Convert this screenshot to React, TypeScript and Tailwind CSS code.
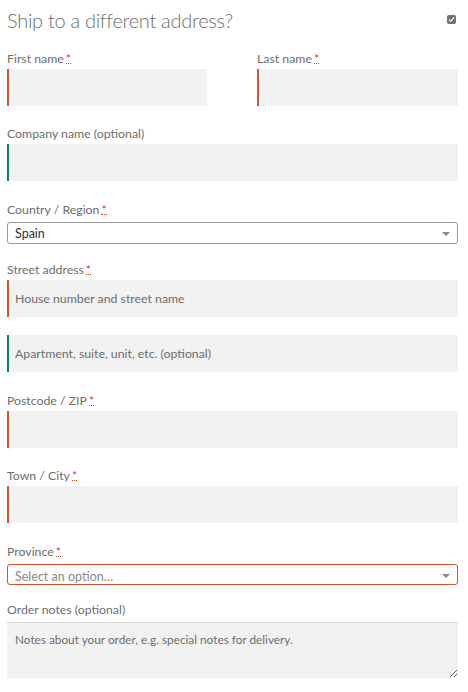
import React from "react";

const RED = "border-l-[#d9502d]";
const font = { fontFamily: "Lato, 'Source Sans Pro', sans-serif" } as React.CSSProperties;

function Req() {
  return (
    <abbr className="text-[#d0432a] no-underline border-b border-dotted border-[#d0432a] ml-[2px] leading-[9px] inline-block" title="required">
      *
    </abbr>
  );
}

function Label({ children, req }: { children: React.ReactNode; req?: boolean }) {
  return (
    <div className="h-5 leading-5 text-[12.3px] text-[#6d6d6d]">
      {children}
      {req && <Req />}
    </div>
  );
}

function TextInput({ placeholder, ok }: { placeholder?: string; ok?: boolean }) {
  return (
    <input
      placeholder={placeholder}
      className={`block w-full h-[37px] bg-[#f2f2f2] border-0 border-l-2 ${ok ? "border-l-[#0f834d]" : RED} px-[6px] text-[12.3px] text-[#43454b] placeholder:text-[#6d6d6d] outline-none`}
      style={font}
    />
  );
}

function Arrow() {
  return (
    <svg width="8" height="5" viewBox="0 0 8 5" className="absolute right-[7px] top-[9px]">
      <path d="M0 0 L8 0 L4 4 Z" fill="#888" />
    </svg>
  );
}

export default function App() {
  return (
    <div className="bg-white w-[468px] h-[692px] overflow-hidden" style={font}>
      <div className="ml-[7px] w-[451px] flex flex-col">
        <div className="flex items-center justify-between h-[30px] mt-[5px] mb-[14px]">
          <h3 className="text-[20px] font-light text-[#6d6d6d] tracking-[-0.3px]">Ship to a different address?</h3>
          <div className="w-[9px] h-[9px] bg-[#707070] rounded-[2px] flex items-center justify-center mr-[2px] mt-[-1px]">
            <svg width="7" height="7" viewBox="0 0 7 7">
              <path d="M1 3.8 L2.8 5.4 L6 1.4" stroke="white" strokeWidth="1.3" fill="none" />
            </svg>
          </div>
        </div>

        <div className="flex gap-[50px] mb-[18px]">
          <div className="w-[200px]">
            <Label req>First name</Label>
            <TextInput />
          </div>
          <div className="w-[201px]">
            <Label req>Last name</Label>
            <TextInput />
          </div>
        </div>

        <div className="mb-[19px]">
          <Label>Company name (optional)</Label>
          <TextInput ok />
        </div>

        <div className="mb-[16px]">
          <Label req>Country / Region</Label>
          <div className="relative mt-[2px] h-[22px] border border-[#9a9a9a] rounded-[3px] pl-[7px] text-[12.5px] leading-[21px] text-[#333]">
            Spain
            <Arrow />
          </div>
        </div>

        <div className="mb-[18px]">
          <Label req>Street address</Label>
          <TextInput placeholder="House number and street name" />
        </div>

        <div className="mb-[19px]">
          <TextInput ok placeholder="Apartment, suite, unit, etc. (optional)" />
        </div>

        <div className="mb-[18px]">
          <Label req>Postcode / ZIP</Label>
          <TextInput />
        </div>

        <div className="mb-[19px]">
          <Label req>Town / City</Label>
          <TextInput />
        </div>

        <div className="mb-[15px]">
          <Label req>Province</Label>
          <div className="relative mt-[2px] h-[21px] border border-[#d9502d] rounded-[3px] pl-[7px] text-[12.5px] leading-[23px] text-[#8a8a8a] overflow-hidden">
            Select an option…
            <Arrow />
          </div>
        </div>

        <div>
          <Label>Order notes (optional)</Label>
          <textarea
            placeholder="Notes about your order, e.g. special notes for delivery."
            className="block w-full h-[56px] mt-[2px] bg-[#f2f2f2] border-0 border-t border-[#d6d6d6] px-[8px] pt-[8px] text-[11.8px] placeholder:text-[#6d6d6d] outline-none"
            style={font}
          />
        </div>
      </div>
    </div>
  );
}
